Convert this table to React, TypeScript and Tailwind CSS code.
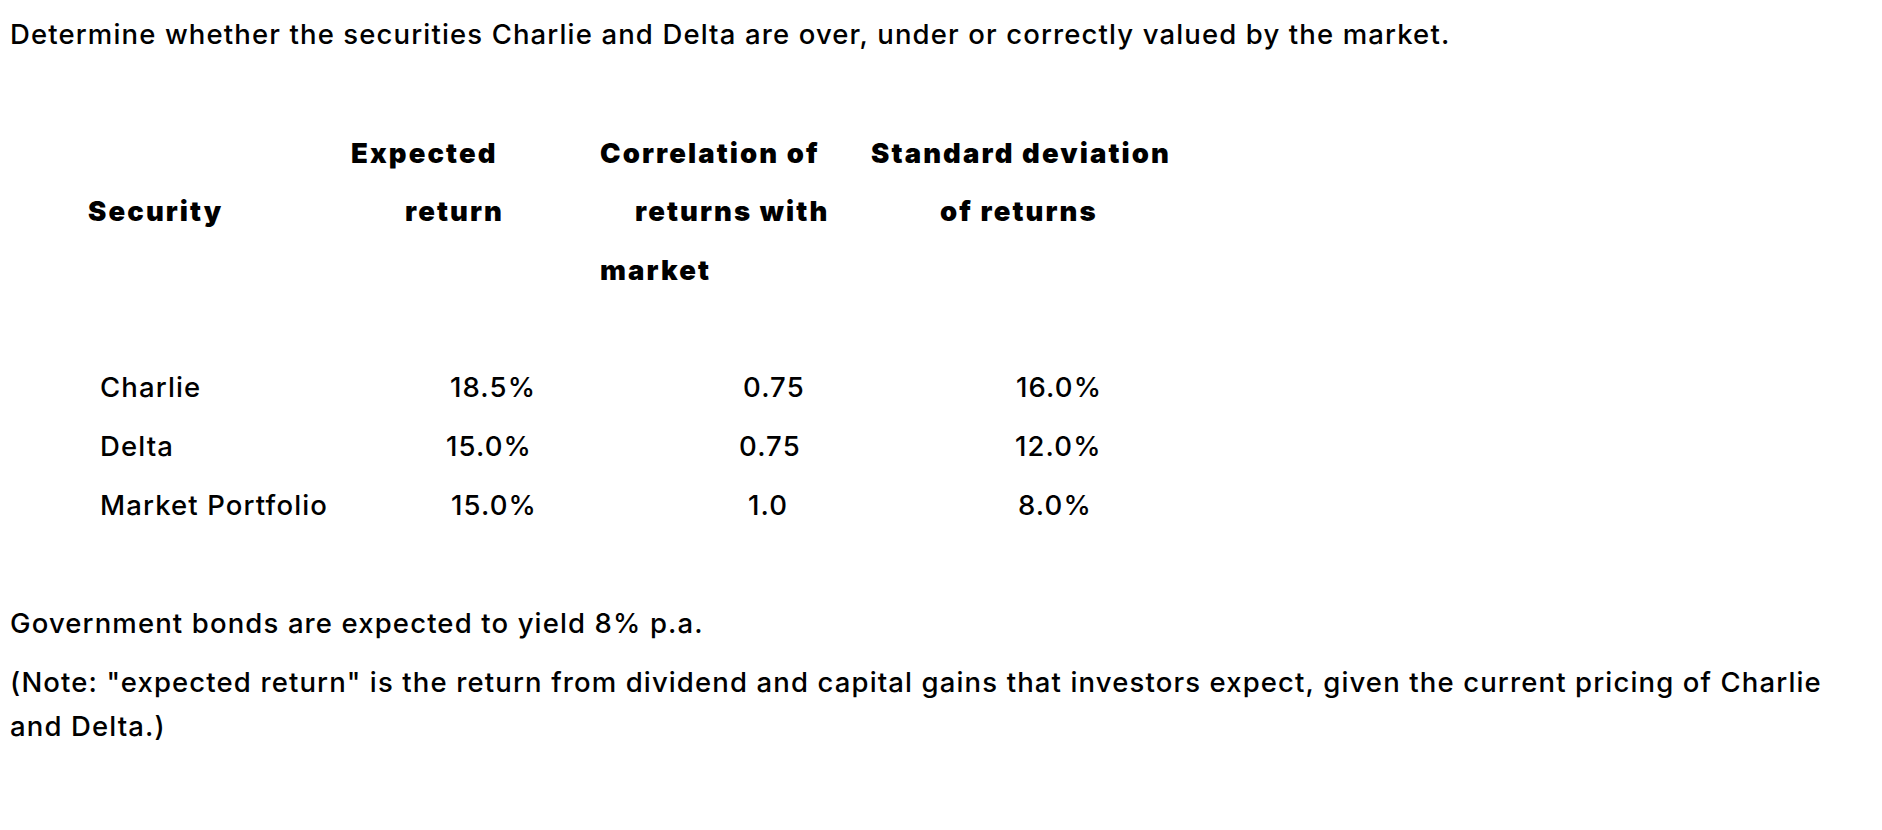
import React from "react";

export default function App() {
  return (
    <div className="min-h-screen bg-white text-black font-['Inter',sans-serif] text-[27.5px] font-[550] tracking-[0.041em] antialiased">
      <p className="pl-[10px] pt-[12px] leading-[44px]">
        Determine whether the securities Charlie and Delta are over, under or correctly valued by the market.
      </p>

      <div className="mt-[67.5px] leading-[58.7px]">
        <div className="grid grid-cols-[330px_268px_270px_1fr] font-black tracking-[2.1px]">
          <div className="pl-[88px] pt-[58.7px]">Security</div>
          <div>
            <div className="pl-[21px]">Expected</div>
            <div className="pl-[75px]">return</div>
          </div>
          <div>
            <div className="pl-[2px]">Correlation of</div>
            <div className="pl-[37px]">returns with</div>
            <div className="pl-[2px]">market</div>
          </div>
          <div>
            <div className="pl-[3px]">Standard deviation</div>
            <div className="pl-[72px]">of returns</div>
          </div>
        </div>

        <div className="mt-[58.7px]">
          <div className="grid grid-cols-[330px_268px_270px_1fr]">
            <div className="pl-[100px]">Charlie</div>
            <div className="pl-[120px]">18.5%</div>
            <div className="pl-[145px]">0.75</div>
            <div className="pl-[148px]">16.0%</div>
          </div>
          <div className="grid grid-cols-[330px_268px_270px_1fr]">
            <div className="pl-[100px]">Delta</div>
            <div className="pl-[116px]">15.0%</div>
            <div className="pl-[141px]">0.75</div>
            <div className="pl-[147px]">12.0%</div>
          </div>
          <div className="grid grid-cols-[330px_268px_270px_1fr]">
            <div className="pl-[100px]">Market Portfolio</div>
            <div className="pl-[121px]">15.0%</div>
            <div className="pl-[150px]">1.0</div>
            <div className="pl-[150px]">8.0%</div>
          </div>
        </div>
      </div>

      <div className="pl-[10px] mt-[67px] leading-[44px]">
        <p>Government bonds are expected to yield 8% p.a.</p>
        <p className="mt-[15px]">
          (Note: "expected return" is the return from dividend and capital gains that investors expect, given the current pricing of Charlie
          <br />
          and Delta.)
        </p>
      </div>
    </div>
  );
}
